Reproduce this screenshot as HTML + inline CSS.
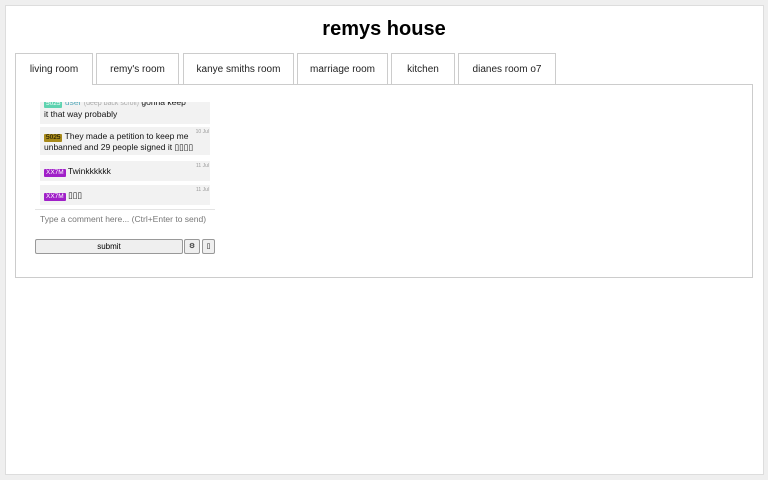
<!DOCTYPE html><html><head><style>
body{margin:0;background:#efefef;font-family:"Liberation Sans",sans-serif;}
.card{position:absolute;left:5px;top:5px;width:757px;height:468px;background:#fff;border:1px solid #ddd;}
h1{position:absolute;left:0;right:0;top:18px;margin:0;text-align:center;font-size:20px;font-weight:bold;color:#000}
.tab{position:absolute;top:53px;height:31px;border:1px solid #ccc;border-bottom:none;background:#fff;font-size:10px;color:#222;text-align:center;line-height:31px;box-sizing:border-box}
.panel{position:absolute;left:15px;top:84px;width:738px;height:194px;border:1px solid #ccc;box-sizing:border-box}
.msg{position:absolute;left:40px;width:170px;background:#f2f2f2;font-size:8.5px;color:#111;line-height:11px}
.b{display:inline-block;font-size:6.5px;color:#fff;padding:0 2px;line-height:8px;border-radius:1px}
.ts{position:absolute;right:1px;font-size:5px;color:#999}
</style></head><body>
<div class="card"></div>
<h1>remys house</h1>
<div class="panel"></div>
<div class="tab" style="left:15px;width:78px;height:32px">living room</div>
<div class="tab" style="left:96px;width:83px">remy's room</div>
<div class="tab" style="left:183px;width:111px">kanye smiths room</div>
<div class="tab" style="left:297px;width:91px">marriage room</div>
<div class="tab" style="left:391px;width:64px">kitchen</div>
<div class="tab" style="left:458px;width:98px">dianes room o7</div>
<div class="msg" style="top:102px;height:22px;padding:0 4px;box-sizing:border-box;overflow:hidden"><div style="margin-top:-5px"><span class="b" style="background:#5fd3b0">5025</span> <span style="color:#5ab">user</span> <span style="color:#aaa;font-size:7px">(deep back scroll)</span> gonna keep<br>it that way probably</div></div>
<div class="msg" style="top:127px;height:28px;padding:4px 4px 0;box-sizing:border-box"><span class="ts" style="top:0">10 Jul</span><span class="b" style="background:#a88a1a;color:#000">5025</span> They made a petition to keep me unbanned and 29 people signed it ▯▯▯▯</div>
<div class="msg" style="top:161px;height:20px;padding:5px 4px 0;box-sizing:border-box"><span class="ts" style="top:0">11 Jul</span><span class="b" style="background:#a020c8">XX7M</span> Twinkkkkkk</div>
<div class="msg" style="top:185px;height:20px;padding:5px 4px 0;box-sizing:border-box"><span class="ts" style="top:0">11 Jul</span><span class="b" style="background:#a020c8">XX7M</span> ▯▯▯</div>
<div style="position:absolute;left:35px;top:209px;width:180px;border-top:1px solid #e4e4e4"></div>
<div style="position:absolute;left:40px;top:214px;font-size:8.5px;color:#777">Type a comment here... (Ctrl+Enter to send)</div>
<div style="position:absolute;left:35px;top:239px;width:148px;height:15px;border:1px solid #999;border-radius:2px;background:#efefef;box-sizing:border-box;font-size:8px;text-align:center;line-height:13px">submit</div>
<div style="position:absolute;left:184px;top:239px;width:16px;height:15px;border:1px solid #999;border-radius:2px;background:#efefef;box-sizing:border-box;font-size:7px;text-align:center;line-height:13px">⚙</div>
<div style="position:absolute;left:202px;top:239px;width:13px;height:15px;border:1px solid #999;border-radius:2px;background:#efefef;box-sizing:border-box;font-size:7px;text-align:center;line-height:13px">▯</div>
</body></html>
